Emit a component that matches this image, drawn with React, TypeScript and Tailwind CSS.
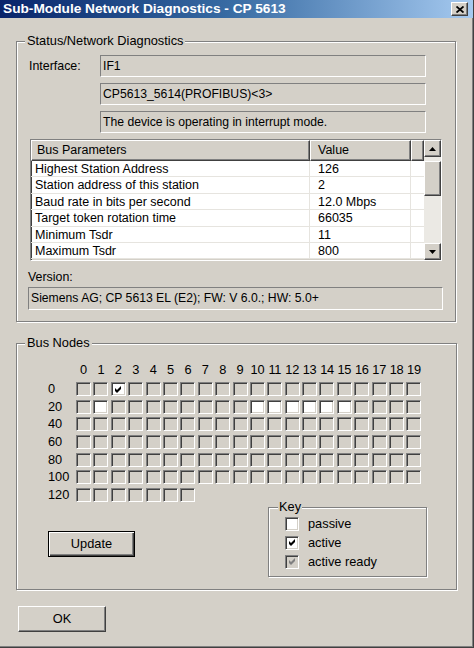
const raised =
  "border border-t-white border-l-white border-r-[#404040] border-b-[#404040] shadow-[inset_-1px_-1px_0_#808080]";
const sunken =
  "border border-t-[#808080] border-l-[#808080] border-r-white border-b-white shadow-[inset_1px_1px_0_#404040,inset_-1px_-1px_0_#d4d0c8]";
const flat = "border border-t-[#808080] border-l-[#808080] border-r-white border-b-white";
const etched = "border border-[#808080] shadow-[inset_1px_1px_0_#fff,1px_1px_0_#fff]";

type BoxState = "off" | "white" | "check" | "grey";

function Tick({ color }: { color: string }) {
  return (
    <svg width="7" height="7" viewBox="0 0 7 7">
      <polygon points="0,2 2,4 6,0 6,3 2,7 0,5" fill={color} />
    </svg>
  );
}

function Box({ state, size }: { state: BoxState; size: string }) {
  const bg = state === "white" || state === "check" ? "bg-white" : "bg-[#d4d0c8]";
  return (
    <div className={`${size} ${bg} ${sunken} flex items-center justify-center`}>
      {state === "check" && <Tick color="#000" />}
      {state === "grey" && <Tick color="#808080" />}
    </div>
  );
}

function Field({ children, className }: { children?: React.ReactNode; className: string }) {
  return (
    <div className={`${className} ${flat} pl-[2px] flex items-center whitespace-nowrap text-[12.2px]`}>
      {children}
    </div>
  );
}

function Arrow({ up }: { up: boolean }) {
  return (
    <div className={`w-[17px] h-[17px] ${raised} bg-[#d4d0c8] flex items-center justify-center`}>
      <svg width="7" height="4" viewBox="0 0 7 4">
        <polygon points={up ? "3.5,0 7,4 0,4" : "0,0 7,0 3.5,4"} fill="#000" />
      </svg>
    </div>
  );
}

const params: [string, string][] = [
  ["Highest Station Address", "126"],
  ["Station address of this station", "2"],
  ["Baud rate in bits per second", "12.0 Mbps"],
  ["Target token rotation time", "66035"],
  ["Minimum Tsdr", "11"],
  ["Maximum Tsdr", "800"],
];

function ParamList() {
  const head = `h-[21px] ${raised} bg-[#d4d0c8] flex items-center text-[12.5px]`;
  return (
    <div className={`mt-[6px] ml-[13px] w-[412px] h-[122px] ${sunken} bg-white flex overflow-hidden`}>
      <div className="flex-1 flex flex-col text-[12.5px]">
        <div className="flex">
          <div className={`${head} w-[279px] pl-[5px]`}>Bus Parameters</div>
          <div className={`${head} w-[101px] pl-[7px]`}>Value</div>
          <div className={`${head} flex-1`} />
        </div>
        {params.map(([k, v]) => (
          <div key={k} className="flex h-[16.4px] leading-[16px] border-b border-[#e6e4df]">
            <div className="w-[279px] pl-[4px] border-r border-[#e6e4df] whitespace-nowrap">{k}</div>
            <div className="w-[101px] pl-[8px] border-r border-[#e6e4df]">{v}</div>
            <div className="flex-1" />
          </div>
        ))}
      </div>
      <div className="w-[17px] flex flex-col bg-[#ebe9e4]">
        <Arrow up />
        <div className={`mt-[4px] h-[35px] ${raised} bg-[#d4d0c8]`} />
        <div className="flex-1" />
        <Arrow up={false} />
      </div>
    </div>
  );
}

const rowLabels = [0, 20, 40, 60, 80, 100, 120];
const cols = Array.from({ length: 20 }, (_, i) => i);

function nodeState(r: number, c: number): BoxState {
  if (r === 0 && c === 2) return "check";
  if (r === 20 && [1, 10, 11, 12, 13, 14, 15].includes(c)) return "white";
  return "off";
}

function NodeGrid() {
  return (
    <div className="mt-[18px] ml-[31px] grid grid-cols-[28px_repeat(20,17.4px)] grid-rows-[20px_repeat(7,17.7px)]">
      <div />
      {cols.map((c) => (
        <div key={c} className="w-[15px] leading-[16px] tracking-[-0.3px] whitespace-nowrap flex justify-center">
          {c}
        </div>
      ))}
      {rowLabels.map((r) => (
        <div key={r} className="contents">
          <div className="h-[14px] leading-[14px]">{r}</div>
          {cols
            .filter((c) => r !== 120 || c < 7)
            .map((c) => (
              <Box key={c} state={nodeState(r, c)} size="w-[15px] h-[14px]" />
            ))}
          {r === 120 && cols.slice(7).map((c) => <div key={c} />)}
        </div>
      ))}
    </div>
  );
}

function KeyRow({ state, label }: { state: BoxState; label: string }) {
  return (
    <div className="flex items-center h-[14px]">
      <Box state={state} size="w-[14px] h-[14px]" />
      <span className="ml-[9px] leading-[14px]">{label}</span>
    </div>
  );
}

export default function App() {
  return (
    <div className="w-[474px] h-[648px] bg-[#d4d0c8] flex flex-col text-[12.8px] text-black font-['Liberation_Sans',Arial,sans-serif] border-r border-b border-r-[#404040] border-b-[#404040] shadow-[inset_-1px_-1px_0_#808080]">
      <div className="h-[18px] shrink-0 flex items-center pl-[3px] pr-[5px] bg-linear-to-r from-[#0a246a] via-[#3a6ea5] to-[#a6caf0]">
        <span className="flex-1 text-white font-bold text-[13.7px] leading-none whitespace-nowrap">
          Sub-Module Network Diagnostics - CP 5613
        </span>
        <div className={`w-[17px] h-[14px] ${raised} bg-[#d4d0c8] flex items-center justify-center`}>
          <svg width="8" height="7" viewBox="0 0 8 7">
            <path d="M0.5 0.5 L7.5 6.5 M7.5 0.5 L0.5 6.5" stroke="#000" strokeWidth="1.8" />
          </svg>
        </div>
      </div>

      <div className={`relative mt-[23px] ml-[16px] w-[440px] h-[281px] shrink-0 ${etched} flex flex-col`}>
        <span className="absolute -top-[9px] left-[8px] px-[2px] bg-[#d4d0c8] leading-[16px]">
          Status/Network Diagnostics
        </span>
        <div className="flex mt-[13px] pl-[12px]">
          <div className="w-[71px] leading-[22px] text-[12.4px]">Interface:</div>
          <div className="flex flex-col gap-[6px]">
            <Field className="w-[326px] h-[22px]">IF1</Field>
            <Field className="w-[326px] h-[22px]">CP5613_5614(PROFIBUS)&lt;3&gt;</Field>
            <Field className="w-[326px] h-[22px]">The device is operating in interrupt mode.</Field>
          </div>
        </div>
        <ParamList />
        <div className="ml-[11px] mt-[8px] leading-[16px] text-[12.4px]">Version:</div>
        <Field className="ml-[11px] mt-[2px] w-[415px] h-[23px]">
          Siemens AG; CP 5613 EL (E2); FW: V 6.0.; HW: 5.0+
        </Field>
      </div>

      <div className={`relative mt-[21px] ml-[16px] w-[441px] h-[247px] shrink-0 ${etched} flex flex-col`}>
        <span className="absolute -top-[9px] left-[8px] px-[2px] bg-[#d4d0c8] leading-[16px]">Bus Nodes</span>
        <NodeGrid />
        <div className="flex items-start mt-[1px] pl-[31px]">
          <button className="mt-[24px] w-[87px] h-[26px] border border-black bg-[#d4d0c8] shadow-[inset_1px_1px_0_#fff,inset_-1px_-1px_0_#404040,inset_-2px_-2px_0_#808080]">
            Update
          </button>
          <div className={`relative ml-[133px] w-[159px] h-[70px] ${etched} flex flex-col gap-[5px] pt-[9px] pl-[16px]`}>
            <span className="absolute -top-[9px] left-[9px] px-[1px] bg-[#d4d0c8] leading-[16px]">Key</span>
            <KeyRow state="white" label="passive" />
            <KeyRow state="check" label="active" />
            <KeyRow state="grey" label="active ready" />
          </div>
        </div>
      </div>

      <button className={`mt-[16px] ml-[18px] w-[88px] h-[26px] shrink-0 ${raised} bg-[#d4d0c8]`}>OK</button>
    </div>
  );
}
